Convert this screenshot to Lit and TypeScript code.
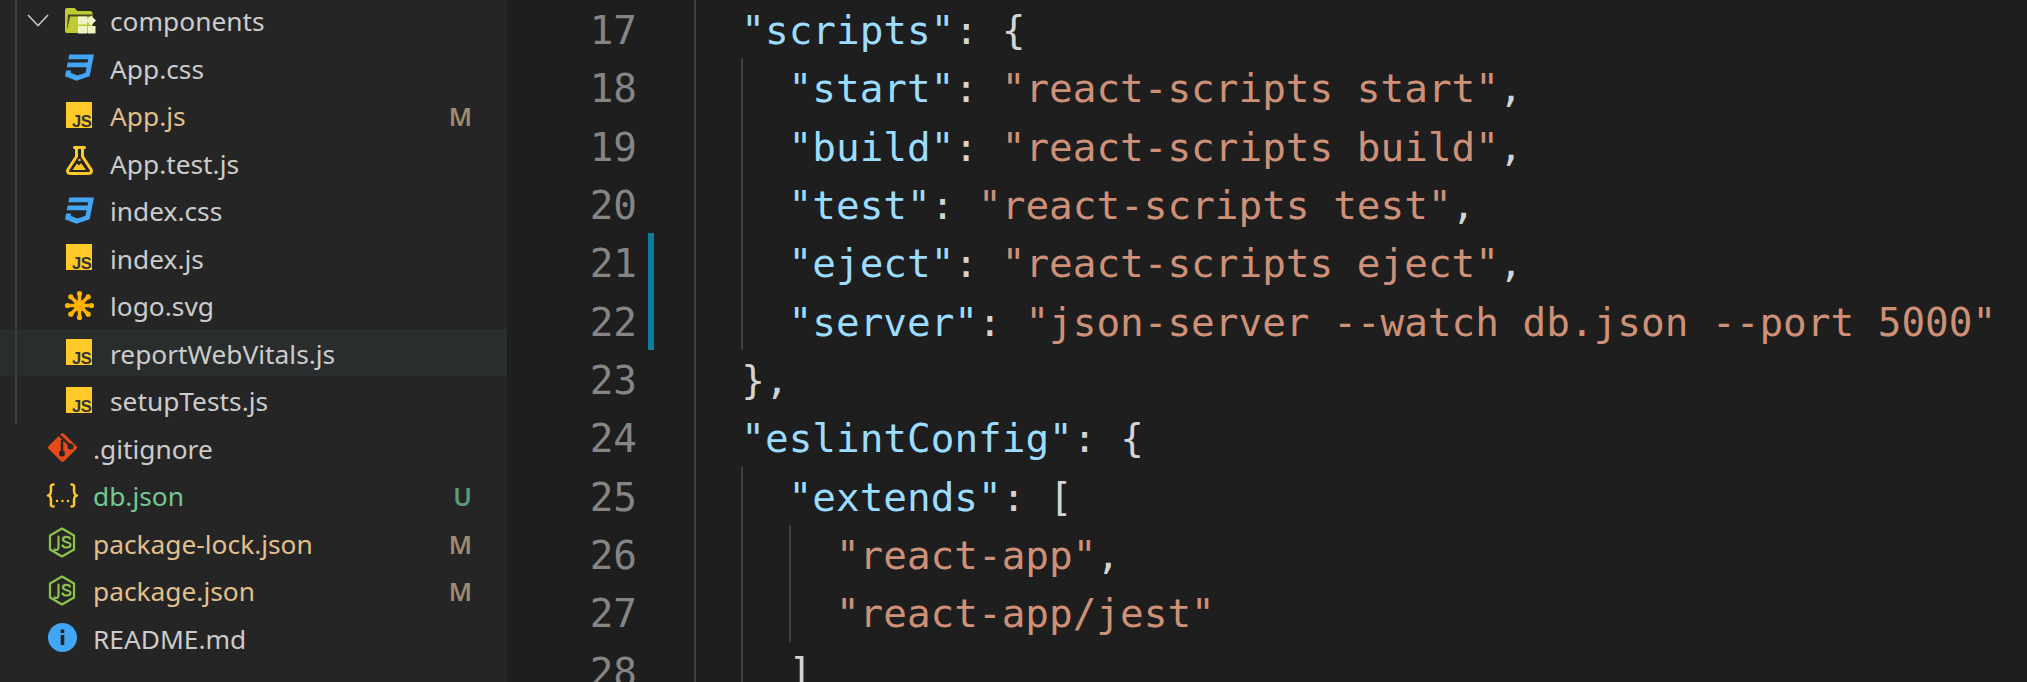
import { LitElement, html, css, svg } from "lit";
import { customElement } from "lit/decorators.js";

const cssIcon = html`<svg class="ic" width="35" height="35" viewBox="0 0 24 24"><path fill="#42a5f5" d="M5 3l-.65 3.34h13.59L17.5 8.5H3.92l-.66 3.33h13.59l-.76 3.81-5.48 1.81-4.75-1.81.33-1.64H2.85l-.79 4 7.85 3 9.05-3 1.2-6.03.24-1.21L21.94 3z"/></svg>`;
const jsIcon = html`<svg class="ic" width="35" height="35" viewBox="0 0 35 35"><rect x="4" y="4" width="26" height="26" fill="#ffca28"/><text x="29.3" y="28.600" text-anchor="end" font-family="Liberation Sans, sans-serif" font-weight="700" font-size="16.500" letter-spacing="-.4" fill="#333">JS</text></svg>`;
const flaskIcon = html`<svg class="ic" width="35" height="35" viewBox="0 0 35 35"><path fill="none" stroke="#ffca28" stroke-width="3" stroke-linejoin="round" stroke-linecap="round" d="M12.500 2.500h10M14.500 2.500v9L6 24.500c-1.500 2.500 0 4 2.500 4h18c2.500 0 4-1.500 2.500-4L20.500 11.500v-9"/><path fill="#ffca28" d="M10.500 25l4.500-6.500 2 2 2-2.500 5 7z"/><circle cx="17.500" cy="15" r="1.200" fill="#ffca28"/></svg>`;
const logoIcon = html`<svg class="ic" width="35" height="35" viewBox="0 0 35 35"><g stroke="#ffb300" stroke-width="3.500" stroke-linecap="round"><path d="M17.500 5.500v24M5.500 17.500h24M8.800 8.800l17.400 17.400M26.200 8.800L8.800 26.200"/></g><g fill="#ffb300"><circle cx="17.500" cy="5.500" r="2.600"/><circle cx="17.500" cy="29.500" r="2.600"/><circle cx="5.500" cy="17.500" r="2.600"/><circle cx="29.500" cy="17.500" r="2.600"/><circle cx="8.800" cy="8.800" r="2.600"/><circle cx="26.200" cy="26.200" r="2.600"/><circle cx="26.200" cy="8.800" r="2.600"/><circle cx="8.800" cy="26.200" r="2.600"/><circle cx="17.500" cy="17.500" r="5.500"/></g></svg>`;
const gitIcon = html`<svg class="ic" width="35" height="35" viewBox="0 0 35 35"><path fill="#e64a19" d="M3.800 16L15.500 4.300q2-2 4 0L31.200 16q2 1.500 0 3L19.500 30.700q-2 2-4 0L3.800 19q-2-1.500 0-3z"/><g stroke="#252526" stroke-width="2.400" fill="none"><path d="M13.500 4.500L26 16.500M17 10v13"/></g><g fill="#252526"><circle cx="17" cy="23.500" r="3"/><circle cx="25.500" cy="16.500" r="3"/></g></svg>`;
const jsonIcon = html`<svg class="ic" width="35" height="35" viewBox="0 0 35 35"><g fill="none" stroke="#ffca28" stroke-width="2.500" stroke-linecap="round" stroke-linejoin="round"><path d="M8.500 6.500c-3.500 0-2.500 2.500-2.500 5.500 0 3-1 5.500-3 5.500 2 0 3 2.500 3 5.500 0 3-1 5.500 2.500 5.500"/><path d="M26.500 6.500c3.500 0 2.500 2.500 2.500 5.500 0 3 1 5.500 3 5.500-2 0-3 2.500-3 5.500 0 3 1 5.500-2.500 5.500"/></g><g fill="#ffca28"><circle cx="12" cy="23" r="1.200"/><circle cx="17.500" cy="23" r="1.200"/><circle cx="23" cy="23" r="1.200"/></g></svg>`;
const nodeIcon = html`<svg class="ic" width="35" height="35" viewBox="0 0 35 35"><path fill="none" stroke="#8bc34a" stroke-width="2.200" stroke-linejoin="round" d="M17 3.500L29 10.500V24.500L17 31.500 5 24.500V10.500z"/><path fill="none" stroke="#8bc34a" stroke-width="2.200" stroke-linecap="round" d="M13.500 11.500v11c0 2.500-2.500 3-4 2M25 13.500c-1-2-7-2.500-7 1 0 3.500 7.500 2 7.500 5.500 0 3.500-7 3-8 .5"/></svg>`;
const infoIcon = html`<svg class="ic" width="35" height="35" viewBox="0 0 35 35"><circle cx="17.500" cy="17.500" r="14.500" fill="#42a5f5"/><rect x="15.700" y="15" width="3.600" height="10" fill="#252526"/><rect x="15.700" y="9.500" width="3.600" height="3.600" fill="#252526"/></svg>`;
const folderIcon = html`<svg class="ic" width="35" height="35" viewBox="0 0 35 35"><path fill="#c0ca33" d="M3 7q0-2 2-2h7.500l3 3h12.500q2.500 0 2.500 2.500V28q0 2-2 2H5q-2 0-2-2z"/><path fill="#252526" d="M6 11.500h24v2H8L5.500 25.500H5z" opacity=".8"/><g fill="#f0f4c3"><rect x="16" y="13.500" width="9" height="8"/><rect x="16" y="23" width="9" height="7.500"/><rect x="26" y="23" width="7.500" height="7.500"/><path d="M29 12.500l5 5-5 5-5-5z"/></g></svg>`;

const chevron = svg`<path fill="none" stroke="#c5c5c5" stroke-width="1.600" d="M1 1l10 10.500L21 1"/>`;

interface Row { name: string; icon: unknown; nested: boolean; kind?: string; badge?: string; hover?: boolean; open?: boolean; }

const rows: Row[] = [
  { name: "components", icon: folderIcon, nested: true, open: true },
  { name: "App.css", icon: cssIcon, nested: true },
  { name: "App.js", icon: jsIcon, nested: true, kind: "mod", badge: "M" },
  { name: "App.test.js", icon: flaskIcon, nested: true },
  { name: "index.css", icon: cssIcon, nested: true },
  { name: "index.js", icon: jsIcon, nested: true },
  { name: "logo.svg", icon: logoIcon, nested: true },
  { name: "reportWebVitals.js", icon: jsIcon, nested: true, hover: true },
  { name: "setupTests.js", icon: jsIcon, nested: true },
  { name: ".gitignore", icon: gitIcon, nested: false },
  { name: "db.json", icon: jsonIcon, nested: false, kind: "unt", badge: "U" },
  { name: "package-lock.json", icon: nodeIcon, nested: false, kind: "mod", badge: "M" },
  { name: "package.json", icon: nodeIcon, nested: false, kind: "mod", badge: "M" },
  { name: "README.md", icon: infoIcon, nested: false },
];

type Tok = [string, string];
interface Line { n: number; indent: number; toks: Tok[]; changed?: boolean; }
const k = (s: string): Tok => ["k", s];
const s = (s: string): Tok => ["s", s];
const p = (s: string): Tok => ["p", s];

const lines: Line[] = [
  { n: 17, indent: 1, toks: [k('"scripts"'), p(": {")] },
  { n: 18, indent: 2, toks: [k('"start"'), p(": "), s('"react-scripts start"'), p(",")] },
  { n: 19, indent: 2, toks: [k('"build"'), p(": "), s('"react-scripts build"'), p(",")] },
  { n: 20, indent: 2, toks: [k('"test"'), p(": "), s('"react-scripts test"'), p(",")] },
  { n: 21, indent: 2, changed: true, toks: [k('"eject"'), p(": "), s('"react-scripts eject"'), p(",")] },
  { n: 22, indent: 2, changed: true, toks: [k('"server"'), p(": "), s('"json-server --watch db.json --port 5000"')] },
  { n: 23, indent: 1, toks: [p("},")] },
  { n: 24, indent: 1, toks: [k('"eslintConfig"'), p(": {")] },
  { n: 25, indent: 2, toks: [k('"extends"'), p(": [")] },
  { n: 26, indent: 3, toks: [s('"react-app"'), p(",")] },
  { n: 27, indent: 3, toks: [s('"react-app/jest"')] },
  { n: 28, indent: 2, toks: [p("]")] },
];

@customElement("app-root")
export class AppRoot extends LitElement {
  static styles = css`
    :host { display: block; width: 2027px; height: 682px; overflow: hidden; background: #1e1e1e; }
    .page { display: flex; height: 682px; }
    .side { width: 507px; flex: none; background: #252526; overflow: hidden; font-family: "Noto Sans", sans-serif; font-size: 26.3px; color: #cccccc; }
    .tree { margin-top: -3.75px; }
    .row { display: flex; align-items: center; height: 47.5px; padding-left: 15px; padding-right: 35px; }
    .row.hover { background: #2a2d2e; }
    .guide { width: 17.5px; height: 100%; flex: none; box-sizing: border-box; }
    .nested .guide { border-left: 2px solid #3c3c3c; }
    .twist { width: 12.5px; flex: none; display: flex; align-items: center; }
    .nested .twist { width: 29.5px; }
    .twist svg { margin-left: -5.5px; }
    .ic { flex: none; display: block; }
    .name { margin-left: 13px; flex: 1; white-space: nowrap; padding-top: 2.6px; }
    .mod .name { color: #e2c08d; }
    .unt .name { color: #73c991; }
    .badge { font-weight: 600; font-size: 25px; padding-top: 2.6px; }
    .mod .badge { color: #a08b6c; }
    .unt .badge { color: #5c9a78; }
    .editor { flex: 1; font-family: "DejaVu Sans Mono", monospace; font-size: 39.35px; min-width: 0; }
    .line { display: flex; height: 58.33px; line-height: 61px; white-space: pre; }
    .num { width: 130px; flex: none; text-align: right; color: #858585; }
    .bar { width: 6px; flex: none; margin-left: 11px; }
    .bar.on { background: #0c7d9d; }
    .code { margin-left: 40px; display: flex; }
    .ind { width: 47.3px; flex: none; box-sizing: border-box; border-left: 2px solid #404040; }
    .k { color: #9cdcfe; }
    .s { color: #ce9178; }
    .p { color: #d4d4d4; }
  `;

  render() {
    return html`<div class="page">
      <div class="side"><div class="tree">
        ${rows.map((r) => html`<div class="row ${r.nested ? "nested" : ""} ${r.hover ? "hover" : ""} ${r.kind ?? ""}">
          <span class="guide"></span>
          <span class="twist">${r.open ? html`<svg width="22" height="13" viewBox="0 0 22 13">${chevron}</svg>` : ""}</span>
          ${r.icon}
          <span class="name">${r.name}</span>
          ${r.badge ? html`<span class="badge">${r.badge}</span>` : ""}
        </div>`)}
      </div></div>
      <div class="editor">
        ${lines.map((l) => html`<div class="line">
          <span class="num">${l.n}</span>
          <span class="bar ${l.changed ? "on" : ""}"></span>
          <span class="code">
            ${Array.from({ length: l.indent }, () => html`<span class="ind"></span>`)}
            <span>${l.toks.map((t) => html`<span class=${t[0]}>${t[1]}</span>`)}</span>
          </span>
        </div>`)}
      </div>
    </div>`;
  }
}
